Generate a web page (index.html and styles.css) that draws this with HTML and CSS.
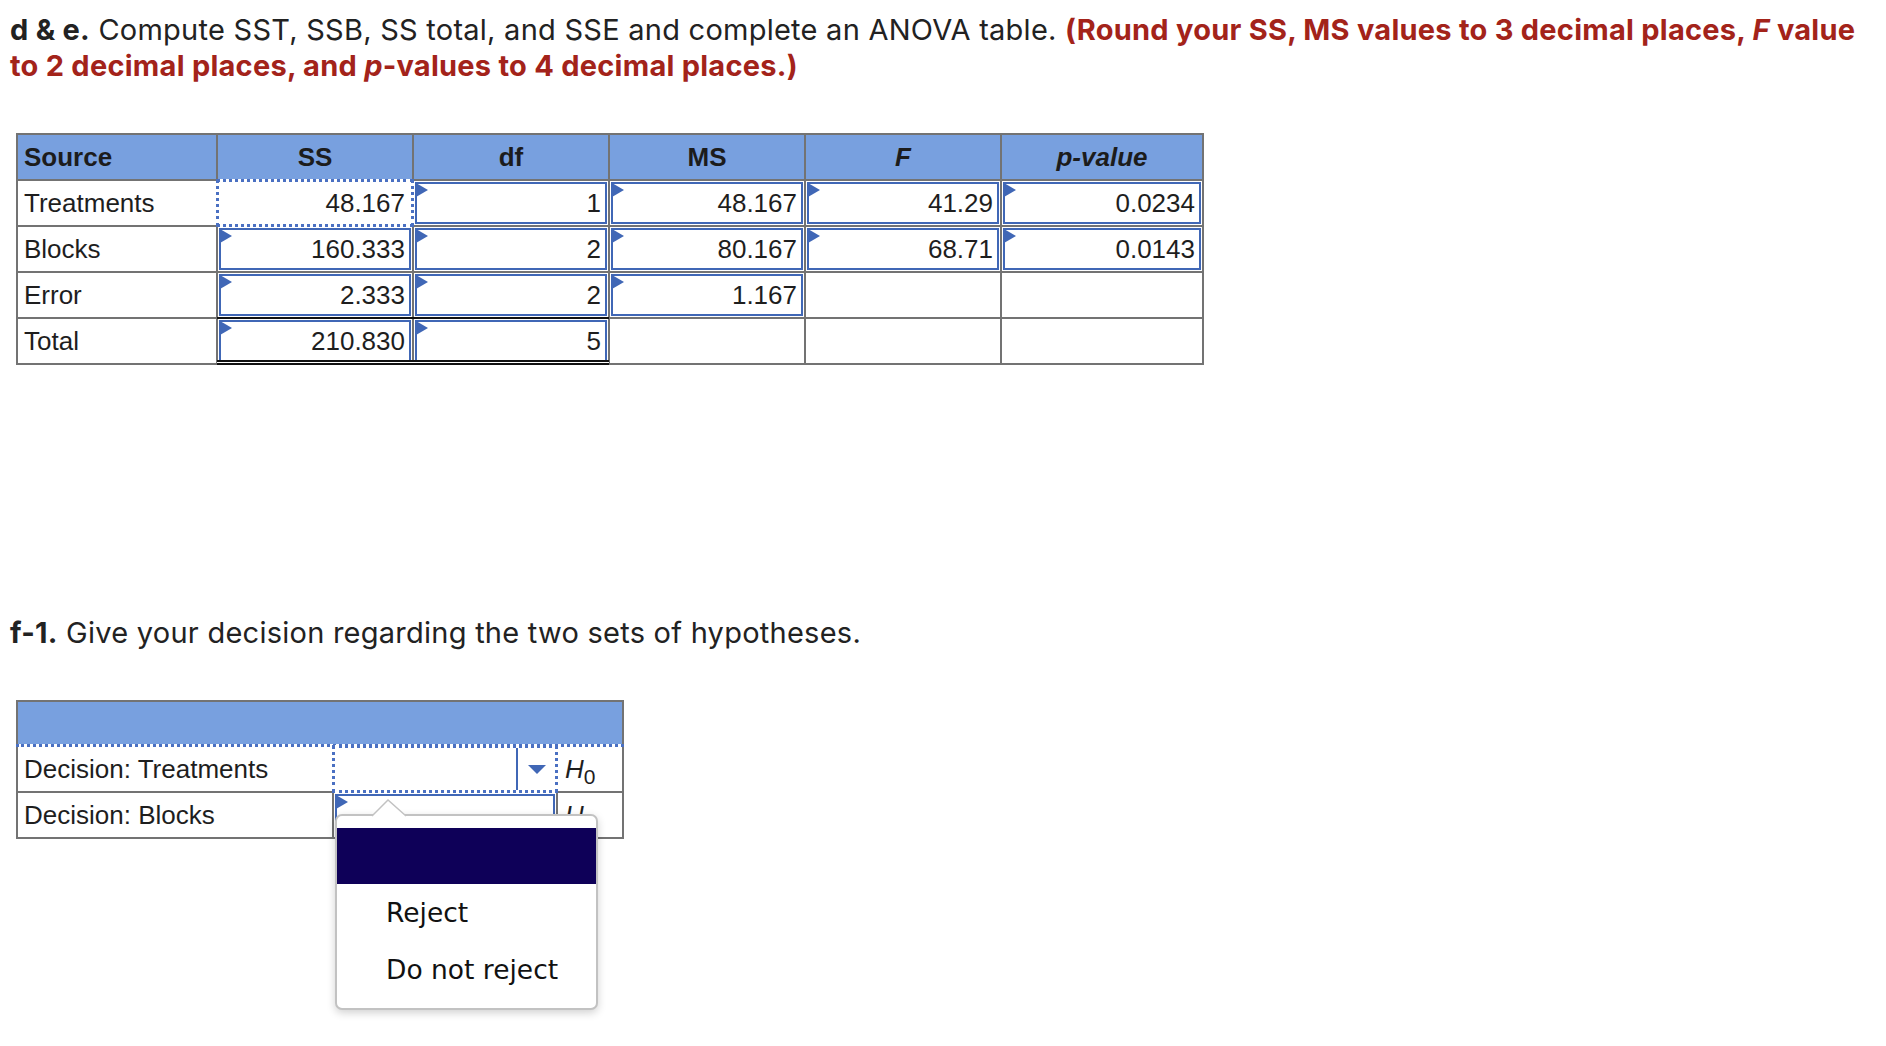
FILE: index.html
```html
<!DOCTYPE html>
<html>
<head>
<meta charset="utf-8">
<link rel="stylesheet" href="styles.css">
</head>
<body>
<p class="q"><b>d &amp; e.</b> Compute SST, SSB, SS total, and SSE and complete an ANOVA table. <span class="red">(Round your SS, MS values to 3 decimal places, <i>F</i> value<br>to 2 decimal places, and <i>p</i>-values to 4 decimal places.)</span></p>

<table class="anova">
  <colgroup>
    <col class="c-src"><col class="c-num"><col class="c-num"><col class="c-num"><col class="c-num"><col class="c-last">
  </colgroup>
  <thead>
    <tr><th class="left">Source</th><th>SS</th><th>df</th><th>MS</th><th><i>F</i></th><th><i>p-value</i></th></tr>
  </thead>
  <tbody>
    <tr>
      <td class="lbl">Treatments</td>
      <td class="focus"><div class="val">48.167</div></td>
      <td><div class="inp">1</div></td>
      <td><div class="inp">48.167</div></td>
      <td><div class="inp">41.29</div></td>
      <td><div class="inp">0.0234</div></td>
    </tr>
    <tr>
      <td class="lbl">Blocks</td>
      <td><div class="inp">160.333</div></td>
      <td><div class="inp">2</div></td>
      <td><div class="inp">80.167</div></td>
      <td><div class="inp">68.71</div></td>
      <td><div class="inp">0.0143</div></td>
    </tr>
    <tr>
      <td class="lbl">Error</td>
      <td><div class="inp">2.333</div></td>
      <td><div class="inp">2</div></td>
      <td><div class="inp">1.167</div></td>
      <td></td>
      <td></td>
    </tr>
    <tr>
      <td class="lbl">Total</td>
      <td class="dbl"><div class="inp">210.830</div></td>
      <td class="dbl"><div class="inp">5</div></td>
      <td></td>
      <td></td>
      <td></td>
    </tr>
  </tbody>
</table>

<p class="q q2"><b>f-1.</b> Give your decision regarding the two sets of hypotheses.</p>

<div class="dec-wrap">
  <table class="dec">
    <colgroup><col class="d1"><col class="d2"><col class="d3"></colgroup>
    <thead><tr><th colspan="3"></th></tr></thead>
    <tbody>
      <tr>
        <td class="lbl">Decision: Treatments</td>
        <td class="focus"><div class="sel"><span class="sel-btn"><span class="caret"></span></span></div></td>
        <td class="hyp"><i>H</i><sub>0</sub></td>
      </tr>
      <tr>
        <td class="lbl">Decision: Blocks</td>
        <td><div class="inp"></div></td>
        <td class="hyp"><i>H</i><sub>1</sub></td>
      </tr>
    </tbody>
  </table>

  <div class="popup">
    <svg class="pointer" width="36" height="18" viewBox="0 0 36 18"><path d="M0 17 L16 1 L34 17" fill="#fff" stroke="#c2c2c2" stroke-width="1.5"/></svg>
    <div class="band"></div>
    <div class="opt">Reject</div>
    <div class="opt">Do not reject</div>
  </div>
</div>
</body>
</html>
```
FILE: styles.css
```css
html, body {
  margin: 0;
  padding: 0;
  background: #fff;
}
body {
  width: 1886px;
  height: 1046px;
  overflow: hidden;
  font-family: "Inter", "Liberation Sans", sans-serif;
  color: #222;
}
.q {
  margin: 12px 0 0 10px;
  font-size: 29px;
  line-height: 36px;
  letter-spacing: 0.25px;
  white-space: nowrap;
}
.q b { font-weight: 700; }
.red {
  color: #a3231a;
  font-weight: 700;
}
.q2 {
  margin-top: 250px;
}

/* shared table bits */
.anova, .dec {
  border-collapse: collapse;
  table-layout: fixed;
  font-family: "Liberation Sans", Arial, sans-serif;
  font-size: 26px;
  color: #1e1e1e;
}
.anova th, .anova td, .dec th, .dec td {
  border: 2px solid #737373;
  height: 44px;
  padding: 0;
}
th {
  background: #78a0df;
  font-weight: 700;
  text-align: center;
  color: #1c1c1c;
}
.anova td.lbl, .dec td.lbl { padding-left: 6px; }

.inp {
  position: relative;
  margin: 1px;
  height: 38px;
  border: 2px solid #4067b6;
  text-align: right;
  padding-right: 4px;
  line-height: 38px;
}
.inp::before {
  content: "";
  position: absolute;
  left: -1px;
  top: -1px;
  border-left: 12px solid #4067b6;
  border-top: 7px solid transparent;
  border-bottom: 7px solid transparent;
}

/* focused (dotted) cells */
td.focus { position: relative; }
td.focus::before,
td.focus::after {
  content: "";
  position: absolute;
  left: -2px;
  right: -2px;
  top: -2px;
  bottom: -2px;
  pointer-events: none;
}
td.focus::before { border: 3px solid #fff; }
td.focus::after { border: 3px dotted #4a70c2; }

/* ANOVA table */
.anova {
  margin: 49px 0 0 16px;
  width: 1186px;
}
.c-src { width: 200px; }
.c-num { width: 196px; }
.c-last { width: 202px; }
.anova th.left { text-align: left; padding-left: 6px; }
.val {
  text-align: right;
  padding-right: 7px;
  line-height: 42px;
}
td.dbl { position: relative; }
td.dbl::before {
  content: "";
  position: absolute;
  left: -1px;
  right: -1px;
  top: -2px;
  height: 2px;
  background: #111;
}
td.dbl::after {
  content: "";
  position: absolute;
  left: -1px;
  right: -1px;
  bottom: -2px;
  height: 1px;
  border-top: 2px solid #111;
  border-bottom: 2px solid #111;
  background: #fff;
}

/* Decision table */
.dec-wrap {
  position: relative;
  margin: 49px 0 0 16px;
}
.dec { width: 606px; }
.d1 { width: 316px; }
.d2 { width: 224px; }
.d3 { width: 66px; }
.dec th {
  height: 43px;
  position: relative;
}
.dec th::after {
  content: "";
  position: absolute;
  left: -2px;
  right: -2px;
  bottom: -2px;
  height: 0;
  border-top: 3px dotted #4a70c2;
  background: #fff;
}
.sel {
  display: flex;
  justify-content: flex-end;
  height: 44px;
}
.sel-btn {
  width: 38px;
  border-left: 2px solid #4067b6;
  display: flex;
  align-items: center;
  justify-content: center;
}
.caret {
  border-top: 9px solid #4067b6;
  border-left: 9px solid transparent;
  border-right: 9px solid transparent;
}
.dec td.hyp {
  padding-left: 7px;
  font-size: 26px;
}
.hyp sub {
  font-size: 21px;
  vertical-align: -6px;
  line-height: 0;
}

.popup {
  position: absolute;
  left: 319px;
  top: 114px;
  width: 259px;
  height: 192px;
  border: 2px solid #c2c2c2;
  border-radius: 7px;
  background: #fff;
  box-shadow: 0 3px 8px rgba(0,0,0,0.18);
  font-family: "DejaVu Sans", Verdana, sans-serif;
  font-size: 26.5px;
  color: #111;
}
.pointer {
  position: absolute;
  left: 35px;
  top: -17px;
}
.band {
  margin-top: 12px;
  height: 56px;
  background: #0e0058;
}
.opt {
  padding-left: 49px;
  height: 57px;
  line-height: 57px;
}
```
